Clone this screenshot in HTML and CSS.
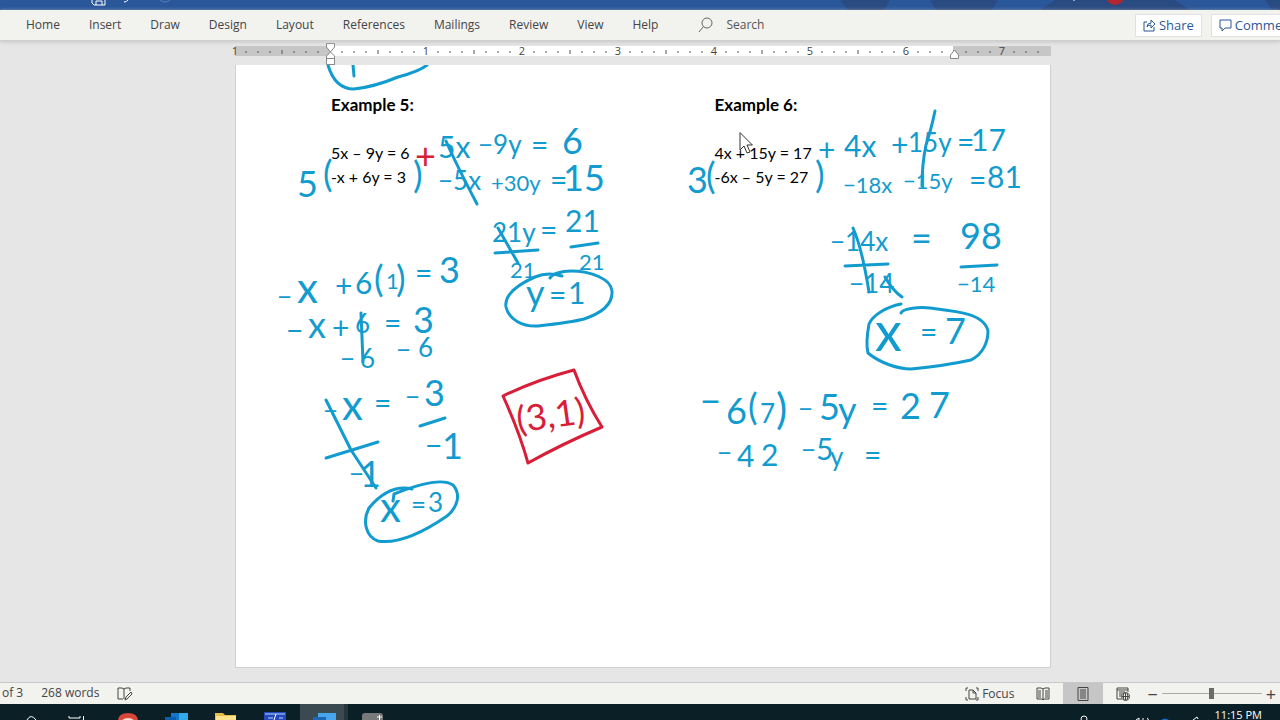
FILE: index.html
```html
<!DOCTYPE html>
<html lang="en">
<head>
<meta charset="utf-8">
<title>Word document</title>
<link rel="stylesheet" href="styles.css">
</head>
<body>
<header class="titlebar">
  <svg class="title-tools" viewBox="0 0 90 10" aria-hidden="true">
    <path class="line-white" d="M2 0V3L4 5H15V0M6 5V1H12V5"/>
    <path class="line-white" d="M38 0Q37 2 34 2"/>
    <path class="line-faint" d="M70 0Q75 4 80 0"/>
  </svg>
  <svg class="title-art" viewBox="0 0 440 10" preserveAspectRatio="none" aria-hidden="true">
    <path class="shade" d="M0 0H50L44 10H8ZM90 0H158L152 10H96ZM215 0H335L350 10H200ZM425 0H440V10H432Z"/>
    <path class="line-white" d="M234 0V1"/>
    <circle class="avatar" cx="275" cy="-4" r="9"/>
  </svg>
</header>
<nav class="ribbon" aria-label="Ribbon">
  <div class="tabs">
    <button>Home</button><button>Insert</button><button>Draw</button><button>Design</button><button>Layout</button><button>References</button><button>Mailings</button><button>Review</button><button>View</button><button>Help</button>
  </div>
  <label class="search">
    <svg width="16" height="16" viewBox="0 0 16 16" aria-hidden="true"><circle cx="9" cy="6" r="5"/><path d="M5.500 9.500L1 15"/></svg>
    <input type="text" placeholder="Search">
  </label>
  <div class="actions">
    <button class="action"><svg width="13" height="13" viewBox="0 0 13 13" aria-hidden="true"><path d="M4 3H1V12H11V8M4 8Q4 4 8 4V1L12 5L8 9V6Q5 6 4 8Z"/></svg>Share</button>
    <button class="action"><svg width="13" height="13" viewBox="0 0 13 13" aria-hidden="true"><path d="M1 1H12V9H6L3 12V9H1Z"/></svg>Comments</button>
  </div>
</nav>
<main class="workspace">
  <svg class="ruler" viewBox="235 41 816 24" aria-hidden="true">
    <defs>
      <pattern id="ticks" x="330" y="46" width="96" height="10" patternUnits="userSpaceOnUse">
        <path class="tick" d="M12 5v2M24 5v2M36 5v2M48 4v4M60 5v2M72 5v2M84 5v2"/>
      </pattern>
    </defs>
    <rect class="margin" x="235" y="46" width="816" height="10"/>
    <rect class="measure" x="330" y="46" width="623" height="10"/>
    <rect fill="url(#ticks)" x="240" y="46" width="804" height="10"/>
    <g class="numbers">
      <text x="235" y="55">1</text><text x="426" y="55">1</text><text x="522" y="55">2</text><text x="618" y="55">3</text><text x="714" y="55">4</text><text x="810" y="55">5</text><text x="906" y="55">6</text><text x="1002" y="55">7</text>
    </g>
    <path class="indent" d="M326.500 43.500H334.500V47L330.500 52L326.500 47ZM330.500 52L334.500 56V64.500H326.500V56ZM326.500 58.500H334.500M950.500 58.500V55L954.500 50L958.500 55V58.500Z"/>
  </svg>
  <article class="page">
    <section class="example">
      <h2>Example 5:</h2>
      <p>5x – 9y = 6</p>
      <p>-x + 6y = 3</p>
    </section>
    <section class="example">
      <h2>Example 6:</h2>
      <p>4x + 15y = 17</p>
      <p>-6x – 5y = 27</p>
    </section>
    <svg class="ink" viewBox="235 65 816 602">
      <!-- Tail of the previous answer -->
      <path d="M328 65Q335 89 354 89Q374 87 398 77Q420 71 427 65M353 65L354 76"/>

      <!-- Example 5: elimination -->
      <text class="w4" x="297" y="197">5</text><text class="w4" x="323" y="187">(</text><text class="w4" x="413" y="188">)</text>
      <text class="w4 red" x="415" y="169">+</text>
      <text class="w3" x="438" y="158">5x</text><text class="w2" x="478" y="154">−9y</text><text class="w3" x="531" y="156">=</text><text class="w4" x="562" y="154">6</text>
      <text class="w2" x="438" y="190">−5x</text><text class="w1" x="491" y="191">+30y</text><text class="w3" x="550" y="191">=</text><text class="w4" x="563" y="191">15</text>
      <path d="M446 141Q456 164 477 204"/>
      <text class="w2" x="492" y="242">21y</text><text class="w3" x="540" y="241">=</text><text class="w3" x="565" y="232">21</text>
      <path d="M495 253L538 250M571 247L598 243M498 228L518 263"/>
      <text class="w1" x="510" y="278">21</text><text class="w1" x="579" y="270">21</text>
      <text class="w4" x="526" y="306">y</text><text class="w3" x="549" y="306">=</text><text class="w3" x="568" y="304">1</text>
      <path d="M562 276C552 273 542 274 535 277C517 285 504 295 506 307C509 320 523 327 538 326C556 324 573 322 584 319C602 313 613 304 612 291C611 279 591 271 571 271C561 271 552 274 550 278"/>

      <!-- Example 5: substitution -->
      <text class="w2" x="277" y="306">−</text><text class="w5" x="297" y="303">x</text><text class="w3" x="335" y="297">+</text><text class="w3" x="355" y="294">6</text><text class="w4" x="374" y="292">(</text><text class="w1" x="386" y="289">1</text><text class="w4" x="396" y="292">)</text><text class="w3" x="415" y="284">=</text><text class="w4" x="439" y="283">3</text>
      <text class="w3" x="286" y="341">−</text><text class="w4" x="308" y="338">x</text><text class="w3" x="332" y="339">+</text><text class="w2" x="355" y="333">6</text><text class="w3" x="384" y="334">=</text><text class="w4" x="413" y="333">3</text>
      <text class="w2" x="340" y="368">−</text><text class="w2" x="360" y="368">6</text><text class="w2" x="396" y="359">−</text><text class="w2" x="418" y="357">6</text>
      <path d="M361 313L363 362"/>
      <text class="w2" x="323" y="420">−</text><text class="w5" x="342" y="420">x</text><text class="w3" x="374" y="414">=</text><text class="w2" x="405" y="406">−</text><text class="w4" x="424" y="406">3</text>
      <path d="M326 400L351 450L376 488M326 458L378 442M420 426L445 418"/>
      <text class="w2" x="349" y="483">−</text><text class="w4" x="360" y="487">1</text><text class="w3" x="425" y="456">−</text><text class="w4" x="442" y="459">1</text>
      <text class="w5" x="380" y="522">x</text><text class="w2" x="411" y="514">=</text><text class="w2" x="428" y="512">3</text>
      <path d="M412 489C394 485 379 496 369 508C362 521 366 537 378 541C402 545 431 527 447 516C458 507 461 494 453 485C443 478 419 484 394 494L393 501"/>
      <path class="red-line" d="M503 396Q536 380 574 370Q585 400 602 427Q562 444 528 463Q519 431 503 396Z"/>
      <text class="w4 red" transform="rotate(-8 550 415)" x="516" y="428">(3,1)</text>

      <!-- Example 6: elimination -->
      <text class="w4" x="687" y="193">3</text><text class="w4" x="706" y="189">(</text><text class="w4" x="815" y="188">)</text>
      <text class="w3" x="818" y="161">+</text><text class="w3" x="844" y="157">4x</text><text class="w3" x="891" y="156">+</text><text class="w2" x="908" y="152">15y</text><text class="w3" x="957" y="153">=</text><text class="w3" x="971" y="151">17</text>
      <path d="M935 111Q931 130 926 145Q922 164 922 186"/>
      <text class="w1" x="843" y="193">−18x</text><text class="w1" x="903" y="189">−15y</text><text class="w3" x="969" y="191">=</text><text class="w3" x="987" y="188">81</text>
      <text class="w2" x="830" y="251">−14x</text><text class="w4" x="911" y="251">=</text><text class="w4" x="960" y="249">98</text>
      <path d="M845 266L888 264M961 267L997 265M853 228Q862 248 869 292M885 277Q893 291 902 297"/>
      <text class="w2" x="849" y="293">−14</text><text class="w1" x="957" y="292">−14</text>
      <text class="w6" x="875" y="351">x</text><text class="w3" x="920" y="343">=</text><text class="w4" x="945" y="344">7</text>
      <path d="M901 304C886 307 873 315 869 324C867 335 866 345 868 353C880 363 898 369 911 369C932 367 953 364 971 360C983 354 988 342 988 331C984 313 955 311 930 308C920 307 903 308 901 313"/>

      <!-- Example 6: substitution -->
      <text class="w4" x="700" y="414">−</text><text class="w4" x="726" y="424">6</text><text class="w4" x="748" y="420">(</text><text class="w2" x="760" y="423">7</text><text class="w5" x="776" y="424">)</text><text class="w2" x="798" y="418">−</text><text class="w4" x="819" y="420">5</text><text class="w4" x="838" y="423">y</text><text class="w3" x="871" y="417">=</text><text class="w4" x="900" y="419">2</text><text class="w4" x="929" y="418">7</text>
      <text class="w2" x="717" y="462">−</text><text class="w3" x="737" y="467">4</text><text class="w3" x="761" y="466">2</text><text class="w2" x="801" y="459">−</text><text class="w3" x="816" y="460">5</text><text class="w2" x="830" y="466">y</text><text class="w3" x="864" y="466">=</text>

      <path class="pointer" d="M740 133V150L744 146L747 153L750 152L747 145H752Z"/>
    </svg>
  </article>
</main>
<footer class="statusbar">
  <span>of 3</span>
  <span>268 words</span>
  <svg width="16" height="14" viewBox="0 0 16 14" aria-hidden="true"><path d="M6 12H1V1H5L7 2V12M7 2L9 1H13V4M8 13L9 10L14 5L15 7L10 12Z"/></svg>
  <div class="view-tools">
    <button class="focus"><svg width="14" height="14" viewBox="0 0 14 14" aria-hidden="true"><path d="M3 1H1V4M11 1H13V4M1 10V13H3M13 10V13H11M4 3H8L11 6V12H4ZM8 3V6H11"/></svg>Focus</button>
    <button class="view" aria-label="Read mode"><svg width="14" height="14" viewBox="0 0 14 14" aria-hidden="true"><path d="M7 2L5 1H1V12H6L7 13L8 12H13V1H9ZM7 2V12M2 4H5M2 6H5M2 8H5M2 10H5M9 4H12M9 6H12M9 8H12M9 10H12"/></svg></button>
    <button class="view active" aria-label="Print layout"><svg width="14" height="14" viewBox="0 0 14 14" aria-hidden="true"><path d="M2 .5H12V13.500H2ZM4 3H10M4 5H10M4 7H10M4 9H10M4 11H10"/></svg></button>
    <button class="view" aria-label="Web layout"><svg width="14" height="14" viewBox="0 0 14 14" aria-hidden="true"><path d="M6 12H1V1H12V5M1 3H12M3 5H9M3 7H6M3 9H5M9.500 5.500A4 4 0 1 0 9.600 5.500ZM6 9.500H13M9.500 6V13M8 6Q6 9 8 13M11 6Q13 9 11 13"/></svg></button>
    <label class="zoom"><span>−</span><input type="range" min="0" max="100" value="50" aria-label="Zoom"><span>+</span></label>
  </div>
</footer>
<div class="taskbar">
  <svg class="apps" viewBox="0 0 400 16" aria-hidden="true">
    <rect x="300" width="44" height="16" fill="#3b4a50"/><rect x="344" width="4" height="16" fill="#26353b"/>
    <path class="line-white" d="M27 16Q31 9 36 16M69 12V14H80V12M83.500 12V16"/>
    <path fill="#d9473b" d="M118 16Q119 9 128 9Q137 9 138 16Z"/><path fill="#f5ddd8" d="M122 16Q128 12 134 16Z"/>
    <path fill="#1477c9" d="M171 9H188V16H171Z"/><path fill="#32a9e8" d="M179 9H188V16H179Z"/><path fill="#0a5eaf" d="M165 13H176V16H165Z"/>
    <path fill="#e6bd4d" d="M215 9H223L225 11H236V16H215Z"/><path fill="#ffe28a" d="M216 12H236V16H216Z"/>
    <path fill="#2549bc" d="M264 8H286V16H264Z"/><path stroke="#b8d6ff" d="M265 10H285M268 14H273M279 14H283"/><path stroke="#fff" d="M276 10L274 16"/>
    <path fill="#46a5ed" d="M318 9H336V16H318Z"/><path fill="#1c67b8" d="M313 13H326V16H313Z"/>
    <rect x="362" y="9" width="21" height="12" rx="3" fill="#77797b"/><path class="line-white" d="M377 13H382M379.500 11V16"/>
  </svg>
  <svg class="tray" viewBox="0 0 130 16" aria-hidden="true">
    <circle class="line-white" cx="7" cy="15" r="3"/>
    <path class="line-white" d="M59 16L62 14V16M66 14V16M70 14Q72 15 71 16M116 16L120 13L121 15"/><path fill="#1769c5" d="M84 16Q88 13 92 16Z"/>
  </svg>
  <time>11:15 PM</time>
</div>
</body>
</html>
```
FILE: styles.css
```css
* { box-sizing: border-box; }
body {
  margin: 0;
  height: 100vh;
  display: flex;
  flex-direction: column;
  overflow: hidden;
  background: #e6e6e6;
  color: #444;
  font: 12px/16px "Open Sans", "Noto Sans", sans-serif;
}
button, input { font: inherit; color: inherit; background: none; border: 0; margin: 0; padding: 0; }
svg { flex: none; fill: none; }

.titlebar { flex: none; height: 10px; display: flex; justify-content: space-between; background: #2a579a; }
.title-tools { width: 90px; height: 10px; margin-left: 90px; }
.title-art { width: 440px; height: 10px; }
.shade { fill: #2a4b82; }
.avatar { fill: #b3262d; }
.line-white { fill: none; stroke: #fff; }
.line-faint { stroke: #5c80b8; }

.ribbon {
  flex: none;
  height: 31px;
  display: flex;
  align-items: center;
  position: relative;
  background: #f2f2ef;
  border-bottom: 1px solid #cfcfcf;
  box-shadow: 0 1px 4px #c4c4c4;
}
.tabs { display: flex; gap: 29px; padding-left: 26px; white-space: nowrap; }
.search { display: flex; align-items: center; gap: 12px; margin-left: 40px; }
.search svg { stroke: #666; }
.search input { width: 120px; }
.search input::placeholder { color: #555; opacity: 1; }
.actions { display: flex; gap: 9px; margin-left: auto; margin-right: -29px; color: #2b579a; font-size: 13px; }
.action {
  display: flex;
  align-items: center;
  gap: 3px;
  height: 23px;
  padding: 0 7px;
  background: #fff;
  border: 1px solid #e1e1e1;
}
.action svg { stroke: #2b579a; }

.workspace { flex: 1; min-height: 0; display: flex; flex-direction: column; align-items: center; padding: 0 0 14px 6px; }
.ruler { width: 8.5in; height: 24px; overflow: visible; }
.margin { fill: #c6c6c6; }
.measure { fill: #fff; }
.tick { stroke: #555; }
.numbers { fill: #444; font-size: 11px; text-anchor: middle; }
.indent { fill: #fff; stroke: #888; }
.page {
  flex: 1;
  width: 8.5in;
  position: relative;
  display: grid;
  grid-template-columns: 1fr 1fr;
  align-content: start;
  column-gap: 48px;
  padding: 28px 0 0 95px;
  background: #fff;
  border: 1px solid #d0d0d0;
  border-top: 0;
  color: #000;
}
.example { font: 16px/24px "Comic Sans MS", Lato, sans-serif; }
.example h2 { margin: 0 0 24px; font: inherit; font-size: 17px; font-weight: 700; }
.example p { margin: 0; }
.ink { position: absolute; top: 0; left: -1px; width: 8.5in; height: 602px; font-family: Lato, sans-serif; }
.ink path { stroke: #129bce; stroke-width: 3px; stroke-linecap: round; stroke-linejoin: round; }
.ink text { fill: #129bce; }
.ink .red { fill: #d81e38; }
.ink .red-line { stroke: #d81e38; }
.ink .pointer { fill: #fff; stroke: #333; stroke-width: 1px; }
.w1 { font-size: 22px; }
.w2 { font-size: 26px; }
.w3 { font-size: 30px; }
.w4 { font-size: 36px; }
.w5 { font-size: 42px; }
.w6 { font-size: 54px; }

.statusbar {
  flex: none;
  height: 22px;
  display: flex;
  align-items: center;
  gap: 18px;
  padding-left: 2px;
  background: #f2f2ef;
  border-top: 1px solid #c8c8c8;
}
.statusbar > span { padding-bottom: 2px; }
.statusbar svg { stroke: #444; }
.view-tools { display: flex; align-items: center; align-self: stretch; margin-left: auto; }
.focus { display: flex; align-items: center; gap: 3px; margin-right: 9px; }
.view { width: 40px; height: 100%; display: grid; place-items: center; }
.active { background: #c6c6c6; }
.zoom { display: flex; align-items: center; gap: 4px; padding: 0 4px; font-size: 18px; }
.zoom input { width: 100px; height: 14px; appearance: none; background: linear-gradient(#aaa, #aaa) center / 100% 1px no-repeat; }
.zoom input::-webkit-slider-thumb { appearance: none; width: 5px; height: 11px; background: #6b6b6b; }

.taskbar { flex: none; height: 16px; display: flex; overflow: hidden; background: #0b1f27; color: #fff; }
.apps { width: 400px; height: 16px; }
.tray { width: 130px; height: 16px; margin-left: auto; margin-right: 8px; }
.taskbar time { padding-top: 3px; margin-right: 18px; white-space: nowrap; font-size: 11px; }
```
